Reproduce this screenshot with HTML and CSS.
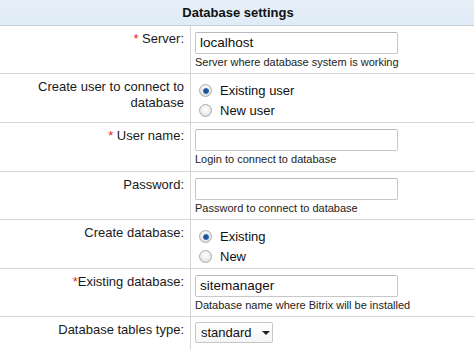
FILE: index.html
```html
<!DOCTYPE html>
<html>
<head>
<meta charset="utf-8">
<link rel="stylesheet" href="styles.css">
</head>
<body>
<div class="panel">
  <div class="head">Database settings</div>

  <div class="row h48">
    <div class="label"><span class="req">*</span> Server:</div>
    <div class="field">
      <div class="input">localhost</div>
      <div class="hint">Server where database system is working</div>
    </div>
  </div>

  <div class="row h49">
    <div class="label">Create user to connect to<br>database</div>
    <div class="field radios">
      <div class="opt"><span class="radio on"></span>Existing user</div>
      <div class="opt"><span class="radio"></span>New user</div>
    </div>
  </div>

  <div class="row h49">
    <div class="label"><span class="req">*</span> User name:</div>
    <div class="field">
      <div class="input"></div>
      <div class="hint">Login to connect to database</div>
    </div>
  </div>

  <div class="row h48">
    <div class="label">Password:</div>
    <div class="field">
      <div class="input"></div>
      <div class="hint">Password to connect to database</div>
    </div>
  </div>

  <div class="row h49">
    <div class="label">Create database:</div>
    <div class="field radios">
      <div class="opt"><span class="radio on"></span>Existing</div>
      <div class="opt"><span class="radio"></span>New</div>
    </div>
  </div>

  <div class="row h48">
    <div class="label"><span class="req">*</span>Existing database:</div>
    <div class="field">
      <div class="input">sitemanager</div>
      <div class="hint">Database name where Bitrix will be installed</div>
    </div>
  </div>

  <div class="row last">
    <div class="label">Database tables type:</div>
    <div class="field sel-field">
      <div class="select">standard<span class="caret"></span></div>
    </div>
  </div>
</div>
</body>
</html>
```

FILE: styles.css
```css
html, body {
  margin: 0;
  padding: 0;
  background: #fff;
}
body {
  font-family: "Liberation Sans", Arial, sans-serif;
  font-size: 13px;
  color: #1a1a1a;
  width: 474px;
  height: 350px;
  overflow: hidden;
}
.panel {
  width: 474px;
}
.head {
  height: 26px;
  box-sizing: border-box;
  border-bottom: 1px solid #c9cdd2;
  background: linear-gradient(#e6f0f9, #dfebf6);
  font-weight: bold;
  font-size: 13px;
  line-height: 25px;
  text-align: center;
  color: #111;
  padding-left: 2px;
}
.row {
  display: grid;
  grid-template-columns: 191px 1fr;
  box-sizing: border-box;
  border-bottom: 1px solid #d6d6d6;
}
.h48 { height: 48px; }
.h49 { height: 49px; }
.row.last {
  height: 40px;
  border-bottom: none;
}
.label {
  border-right: 1px solid #d6d6d6;
  text-align: right;
  padding: 5px 6px 0 0;
  line-height: 16px;
  color: #1a1a1a;
}
.req {
  color: #e0262b;
}
.field {
  padding: 6px 0 0 4px;
}
.input {
  width: 203px;
  height: 22px;
  box-sizing: border-box;
  border: 1px solid #c7c7c7;
  border-top-color: #b9b9b9;
  border-radius: 2px;
  background: #fff;
  font-size: 13.5px;
  line-height: 20px;
  padding-left: 4px;
  color: #111;
}
.hint {
  font-size: 11px;
  line-height: 13px;
  margin-top: 2px;
  color: #222;
}
.radios {
  padding-top: 7px;
}
.opt {
  display: flex;
  align-items: center;
  height: 19px;
  font-size: 13px;
  color: #111;
}
.opt + .opt {
  margin-top: 0.5px;
}
.radio {
  width: 13px;
  height: 13px;
  box-sizing: border-box;
  border-radius: 50%;
  border: 1px solid #a9acae;
  background: radial-gradient(circle at 50% 40%, #ffffff 0%, #eeeeee 50%, #d2d2d2 100%);
  margin: 0 8px 0 4px;
  position: relative;
}
.radio.on::after {
  content: "";
  position: absolute;
  left: 2.5px;
  top: 2.5px;
  width: 6px;
  height: 6px;
  border-radius: 50%;
  background: radial-gradient(circle at 50% 50%, #143a66 0%, #2f6fb3 60%, #6ea6d8 100%);
}
.sel-field {
  padding-top: 5px;
}
.select {
  width: 78px;
  height: 21px;
  box-sizing: border-box;
  border: 1px solid #c7c7c7;
  border-radius: 2px;
  background: linear-gradient(#ffffff, #f4f4f4);
  font-size: 13px;
  line-height: 19px;
  padding-left: 5px;
  color: #111;
  display: flex;
  align-items: center;
}
.caret {
  width: 0;
  height: 0;
  border-left: 4px solid transparent;
  border-right: 4px solid transparent;
  border-top: 4px solid #222;
  margin-left: 10px;
  margin-top: 1px;
}
```
